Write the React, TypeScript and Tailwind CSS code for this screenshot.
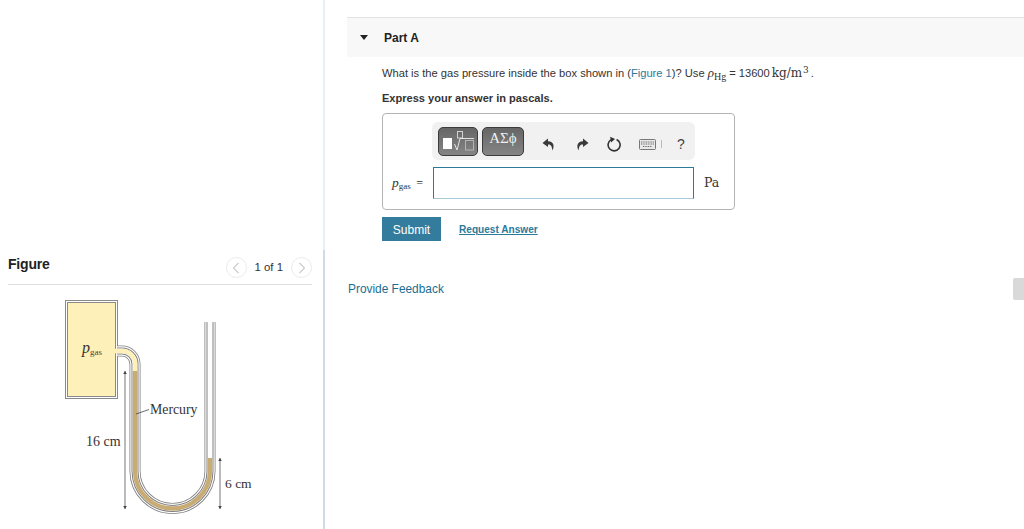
const sans = "font-['Liberation_Sans',Arial,sans-serif]";
const serif = "font-['Liberation_Serif','Times_New_Roman',serif]";
const wide = "font-['DejaVu_Serif',serif]";
const tube = "M117 351 H122 A13 13 0 0 1 135 364 V471 A37.5 37.5 0 0 0 210 471 V322";

function Arrow({ x, y1, y2 }: { x: number; y1: number; y2: number }) {
  return (
    <g>
      <line x1={x} y1={y1} x2={x} y2={y2} stroke="#666" strokeWidth="0.9" />
      <path d={`M${x - 1.8} ${y1 + 3} L${x} ${y1} L${x + 1.8} ${y1 + 3} Z`} fill="#444" />
      <path d={`M${x - 1.8} ${y2 - 3} L${x} ${y2} L${x + 1.8} ${y2 - 3} Z`} fill="#444" />
    </g>
  );
}

function Diagram() {
  return (
    <svg width="323" height="244" viewBox="0 285 323 244" className="block">
      <rect x="65.5" y="300.5" width="52" height="98" fill="#fff" stroke="#8a8a8a" strokeWidth="1" />
      <rect x="67.5" y="302.5" width="48" height="94" fill="#fdf0b8" stroke="#8a8a8a" strokeWidth="1" />
      <path d={tube} fill="none" stroke="#808080" strokeWidth="11" />
      <path d={tube} fill="none" stroke="#fff" strokeWidth="9.4" />
      <path d={tube} fill="none" stroke="#808080" strokeWidth="7" />
      <path d={tube} fill="none" stroke="#fff" strokeWidth="5" />
      <path d="M115 351 H122 A13 13 0 0 1 135 364 V372" fill="none" stroke="#fdf0b8" strokeWidth="4.4" />
      <path d="M135 371 V471 A37.5 37.5 0 0 0 210 471 V458" fill="none" stroke="#c9ac74" strokeWidth="4.4" />
      <Arrow x={125} y1={371} y2={509} />
      <Arrow x={220} y1={458} y2={509} />
      <line x1="136" y1="414" x2="149" y2="409.5" stroke="#444" strokeWidth="0.8" />
      <text x="82" y="353" fontFamily="Liberation Serif" fontSize="16" fontStyle="italic" fill="#333">p</text>
      <text x="90" y="355" fontFamily="Liberation Serif" fontSize="9" fill="#444">gas</text>
      <text x="150" y="414" fontFamily="Liberation Serif" fontSize="13.8" fill="#333">Mercury</text>
      <text x="86" y="446" fontFamily="Liberation Serif" fontSize="14" fill="#333">16 cm</text>
      <text x="225" y="488" fontFamily="Liberation Serif" fontSize="13.5" fill="#333">6 cm</text>
    </svg>
  );
}

function Pager({ dir }: { dir: "l" | "r" }) {
  return (
    <span className="flex h-[21px] w-[21px] items-center justify-center rounded-full border border-[#ebebeb] bg-white">
      <svg width="8" height="12" viewBox="0 0 8 12" fill="none" stroke="#cacaca" strokeWidth="1.1">
        <path d={dir === "l" ? "M6.5 1 L1.5 6 L6.5 11" : "M1.5 1 L6.5 6 L1.5 11"} />
      </svg>
    </span>
  );
}

function Toolbar() {
  return (
    <div className="ml-[49px] flex h-[38px] w-[263px] items-center rounded-[6px] bg-[#f1f1f1] pl-[6px]">
      <div className="flex h-[29px] w-[40px] items-center justify-center self-start mt-[5px] rounded-[5px] border border-[#3c3c3c] bg-gradient-to-b from-[#666] to-[#858585]">
        <svg width="36" height="24" viewBox="0 0 36 24" fill="none">
          <rect x="3" y="8" width="9" height="11" fill="#fff" />
          <rect x="17.5" y="1.5" width="5" height="6.5" stroke="#ddd" strokeWidth="0.9" />
          <path d="M14.5 14 L17 20 L20 8.5 H34" stroke="#eee" strokeWidth="0.9" />
          <rect x="25.5" y="10.5" width="8" height="9.5" stroke="#bbb" strokeWidth="0.9" />
        </svg>
      </div>
      <div className={`ml-[4px] mt-[5px] flex h-[29px] w-[42px] justify-center self-start rounded-[5px] border border-[#3c3c3c] bg-gradient-to-b from-[#666] to-[#858585] text-[15px] leading-[20px] text-[#f0f0f0] ${serif}`}>
        ΑΣϕ
      </div>
      <div className="mt-[6px] flex items-center">
        <svg className="ml-[18px]" width="13" height="13" viewBox="0 0 13 13">
          <path d="M6 0.5 L0.5 5 L6 9 V6.6 C8.6 6.4 10 8 10.4 12.5 C12.6 8.4 12.2 3.4 6 3.2 Z" fill="#3a3a3a" />
        </svg>
        <svg className="ml-[21px]" width="13" height="13" viewBox="0 0 13 13">
          <path d="M7 0.5 L12.5 5 L7 9 V6.6 C4.4 6.4 3 8 2.6 12.5 C0.4 8.4 0.8 3.4 7 3.2 Z" fill="#3a3a3a" />
        </svg>
        <svg className="ml-[18px]" width="15" height="16" viewBox="0 0 15 16" fill="none">
          <path d="M9.6 3.4 A6 6 0 1 1 4.2 3.6" stroke="#333" strokeWidth="1.6" />
          <path d="M3.2 0.8 L8 3 L4 6.5 Z" fill="#333" />
        </svg>
        <svg className="ml-[17px]" width="17" height="11" viewBox="0 0 17 11">
          <rect x="0.5" y="0.5" width="16" height="10" rx="1" fill="#e8e8e8" stroke="#777" />
          <path d="M2 3 H15 M2 5 H15 M4 7.5 H13" stroke="#666" strokeWidth="1" strokeDasharray="1 0.7" />
        </svg>
        <span className="ml-[5px] h-[8px] w-px bg-[#bbb]" />
        <span className={`ml-[15px] text-[14px] text-[#444] ${sans}`}>?</span>
      </div>
    </div>
  );
}

export default function App() {
  return (
    <div className={`relative flex h-[529px] w-[1024px] overflow-hidden bg-white text-[#333] ${sans}`}>
      <aside className="flex h-full w-[323px] shrink-0 flex-col pt-[255px]">
        <div className="ml-[8px] flex h-[30px] w-[304px] items-start justify-between border-b border-[#dedede]">
          <h2 className="text-[14px] leading-[18px] font-bold tracking-[-0.2px] text-[#222]">Figure</h2>
          <div className="mt-[2px] flex items-center gap-[8px] text-[11.4px] leading-[21px] text-[#333]">
            <Pager dir="l" />
            <span>1 of 1</span>
            <Pager dir="r" />
          </div>
        </div>
        <Diagram />
      </aside>
      <div className="flex h-full w-[2px] shrink-0 flex-col">
        <div className="h-[250px] bg-[#e9eff6]" />
        <div className="flex-1 bg-[#cfdaea]" />
      </div>

      <main className="flex-1 pt-[17px] pl-[22px]">
        <div className="flex h-[40px] items-center border-t border-[#e3e3e3] bg-[#f8f8f8] pl-[13px]">
          <span className="h-0 w-0 border-x-[4.5px] border-t-[5px] border-x-transparent border-t-[#222]" />
          <h3 className="ml-[16px] text-[12px] font-bold text-[#222]">Part A</h3>
        </div>
        <div className="pl-[35px]">
          <p className="mt-[6px] flex h-[18px] items-baseline text-[11.15px] text-[#333]">
            <span>What is the gas pressure inside the box shown in (</span>
            <span className="text-[#2a7a9c]">Figure 1</span>
            <span>)? Use&nbsp;</span>
            <span className={`text-[13px] ${serif}`}>
              <i>ρ</i>
              <sub className="text-[10px]">Hg</sub>
            </span>
            <span className="ml-[3px]">=</span>
            <span className="ml-[3px]">13600</span>
            <span className={`ml-[2px] text-[12px] ${wide}`}>
              kg/m<sup className="ml-[1px] text-[9px]">3</sup>
            </span>
            <span className="ml-[2px]">.</span>
          </p>
          <p className="mt-[9px] text-[11.05px] leading-[16px] font-bold text-[#333]">Express your answer in pascals.</p>
          <section className="mt-[7px] h-[97px] w-[353px] rounded-[4px] border border-[#b4b4b4] pt-[8px]">
            <Toolbar />
            <div className="mt-[7px] flex items-center">
              <span className={`ml-[9px] w-[41px] text-[11px] text-[#333] ${serif}`}>
                <i className="text-[13.5px]">p</i>
                <sub className="text-[9px]">gas</sub>&nbsp;&nbsp;<span className="text-[12px]">=</span>
              </span>
              <div className="h-[32px] w-[261px] border border-[#2c7a99] border-b-[#a9cbd9] bg-white" />
              <span className={`ml-[10px] text-[12.5px] text-[#333] ${wide}`}>Pa</span>
            </div>
          </section>
          <div className="mt-[7px] flex items-center">
            <button className="h-[24px] w-[59px] bg-[#347c9d] pt-[1px] text-[12px] text-white">Submit</button>
            <a className="ml-[18px] mt-[1px] text-[10.1px] font-bold text-[#2a7a9c] underline">Request Answer</a>
          </div>
        </div>
        <a className="mt-[40px] ml-[1px] block text-[11.9px] leading-[16px] text-[#1a6e92]">Provide Feedback</a>
      </main>

      <div className="absolute top-[278px] right-0 h-[22px] w-[11px] rounded-l-[2px] bg-[#d9d9d9]" />
    </div>
  );
}
